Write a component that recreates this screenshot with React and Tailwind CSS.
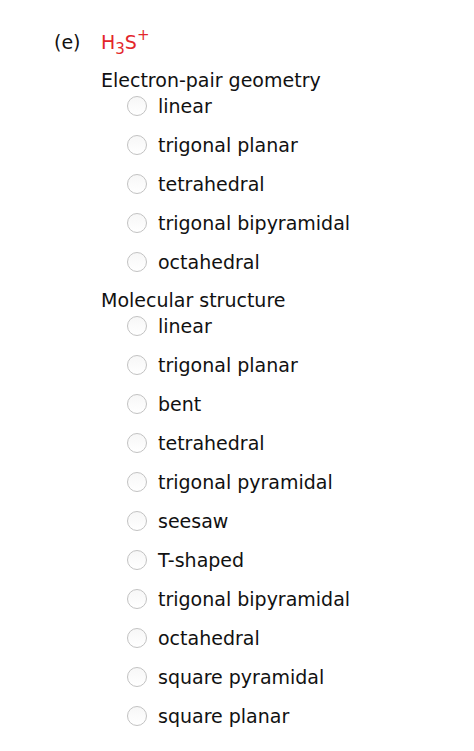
import React from "react";

const ep = ["linear", "trigonal planar", "tetrahedral", "trigonal bipyramidal", "octahedral"];
const ms = [
  "linear",
  "trigonal planar",
  "bent",
  "tetrahedral",
  "trigonal pyramidal",
  "seesaw",
  "T-shaped",
  "trigonal bipyramidal",
  "octahedral",
  "square pyramidal",
  "square planar",
];

function Option({ label, first }) {
  return (
    <div className={`flex items-center h-[26px] ${first ? "" : "mt-[13px]"}`}>
      <span className="w-[20px] h-[20px] rounded-full border-[1.5px] border-[#c2c2c2] bg-gradient-to-b from-[#f7f7f7] to-white shrink-0" />
      <span className="ml-[11px] text-[#111]">{label}</span>
    </div>
  );
}

export default function App() {
  return (
    <div
      className="w-[474px] h-[751px] bg-white pt-[29px] pl-[54px] text-[19px] leading-[26px] text-[#111]"
      style={{ fontFamily: '"DejaVu Sans", Verdana, sans-serif' }}
    >
      <div className="flex h-[26px]">
        <span className="w-[47px]">(e)</span>
        <span className="text-[#e3262b]">
          H<sub className="text-[15px] bottom-[-0.35em]">3</sub>S
          <sup className="text-[15px] top-[-0.6em]">+</sup>
        </span>
      </div>
      <div className="pl-[47px]">
        <div className="mt-[12px]">Electron-pair geometry</div>
        <div className="pl-[26px]">
          {ep.map((l, i) => (
            <Option key={l} label={l} first={i === 0} />
          ))}
        </div>
        <div className="mt-[12px]">Molecular structure</div>
        <div className="pl-[26px]">
          {ms.map((l, i) => (
            <Option key={l} label={l} first={i === 0} />
          ))}
        </div>
      </div>
    </div>
  );
}
